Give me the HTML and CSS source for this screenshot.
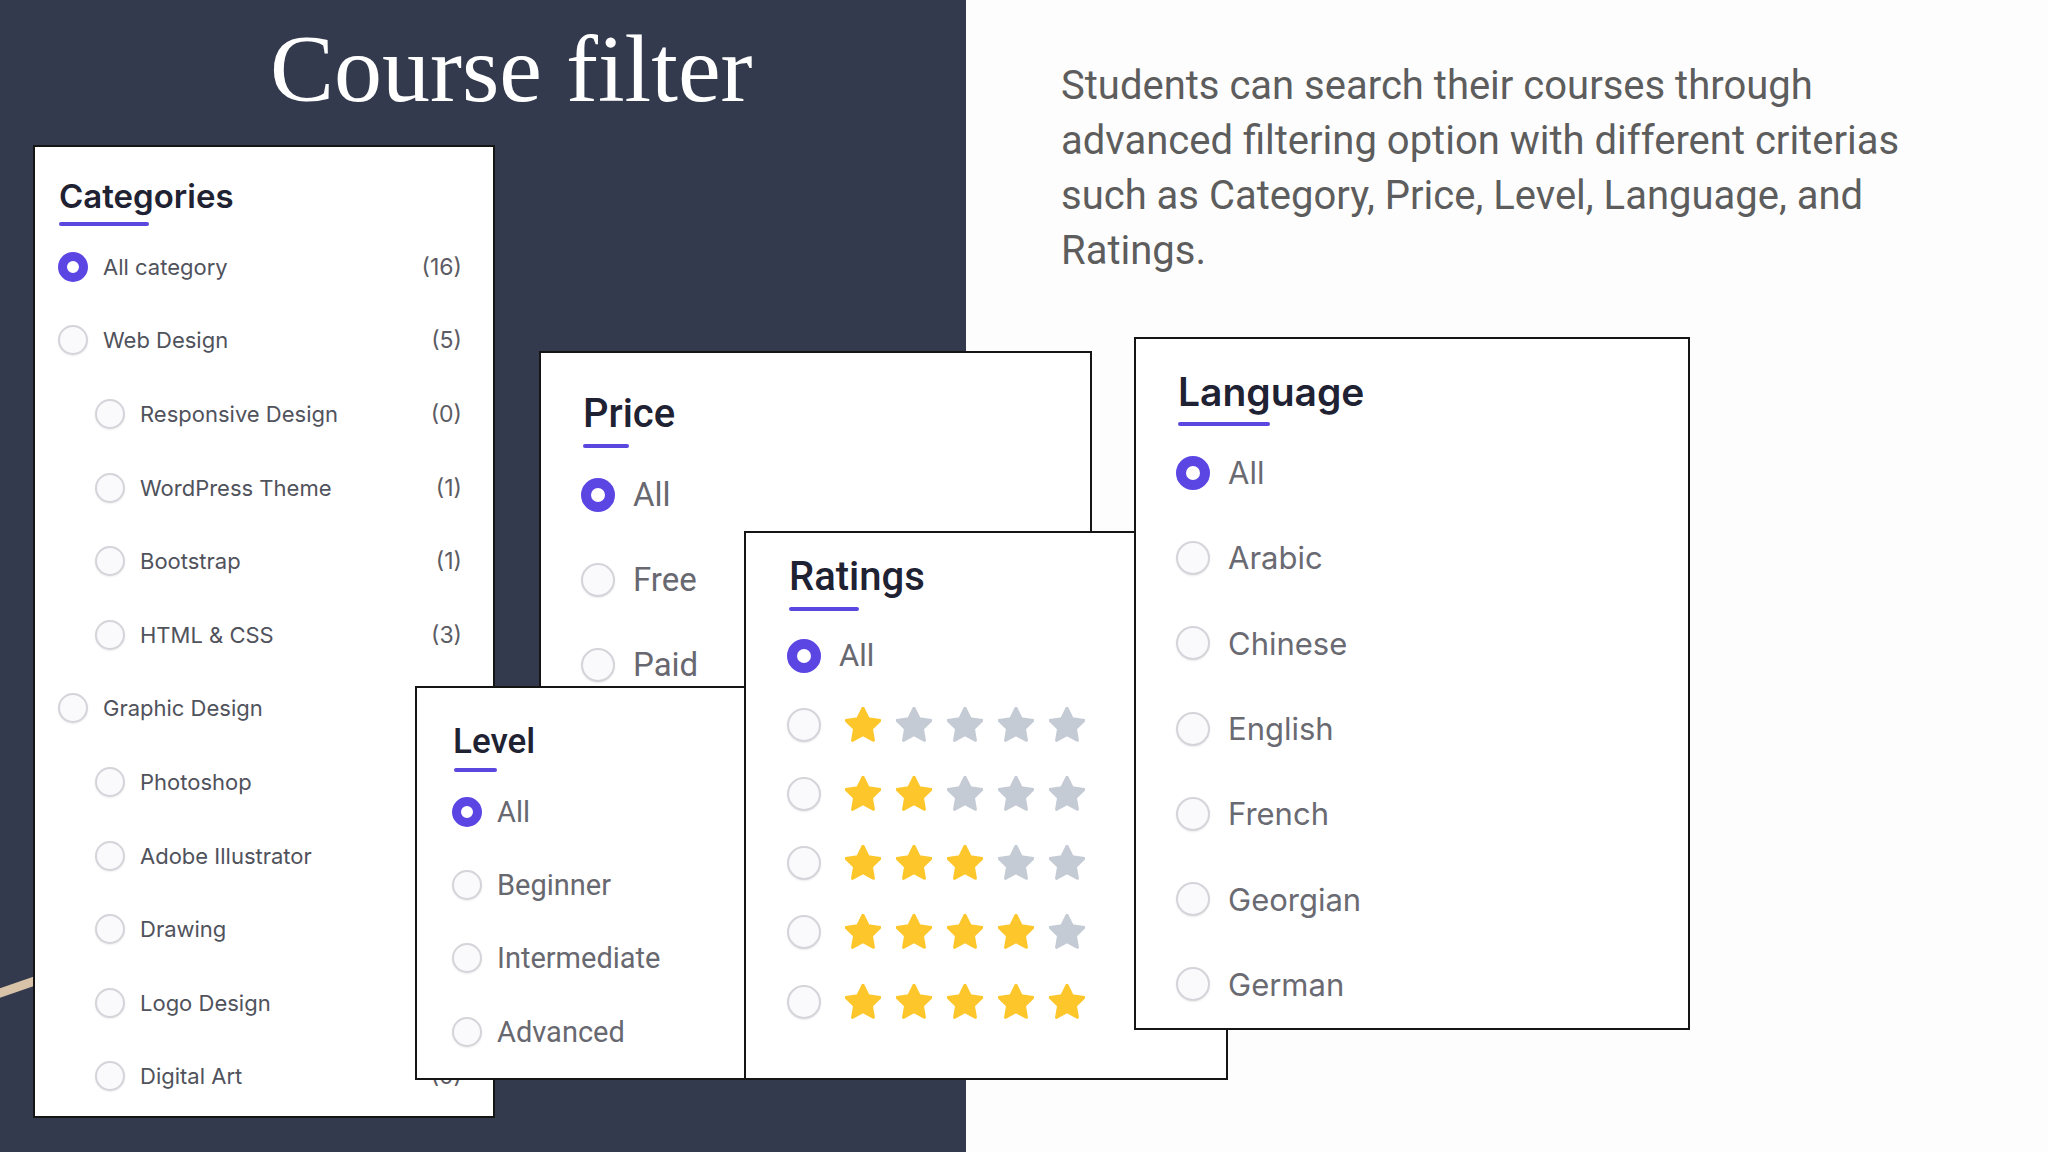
FILE: index.html
```html
<!DOCTYPE html>
<html lang="en">
<head>
<meta charset="utf-8">
<title>Course filter</title>
<link rel="stylesheet" href="styles.css">
</head>
<body>
<div class="page">
  <section class="intro-dark">
    <h1 class="title">Course filter</h1>
  </section>
  <section class="intro-light">
    <p class="desc">Students can search their courses through advanced filtering option with different criterias such as Category, Price, Level, Language, and Ratings.</p>
  </section>

  <div class="collage">
    <span class="deco-line"></span>

    <div class="card card-categories">
      <h2 class="card-head">Categories</h2>
      <span class="card-rule"></span>
      <ul class="opts">
        <li class="opt"><span class="radio on"></span><span class="label">All category</span><span class="count">(16)</span></li>
        <li class="opt"><span class="radio"></span><span class="label">Web Design</span><span class="count">(5)</span></li>
        <li class="opt sub"><span class="radio"></span><span class="label">Responsive Design</span><span class="count">(0)</span></li>
        <li class="opt sub"><span class="radio"></span><span class="label">WordPress Theme</span><span class="count">(1)</span></li>
        <li class="opt sub"><span class="radio"></span><span class="label">Bootstrap</span><span class="count">(1)</span></li>
        <li class="opt sub"><span class="radio"></span><span class="label">HTML &amp; CSS</span><span class="count">(3)</span></li>
        <li class="opt"><span class="radio"></span><span class="label">Graphic Design</span><span class="count">(4)</span></li>
        <li class="opt sub"><span class="radio"></span><span class="label">Photoshop</span><span class="count">(1)</span></li>
        <li class="opt sub"><span class="radio"></span><span class="label">Adobe Illustrator</span><span class="count">(1)</span></li>
        <li class="opt sub"><span class="radio"></span><span class="label">Drawing</span><span class="count">(1)</span></li>
        <li class="opt sub"><span class="radio"></span><span class="label">Logo Design</span><span class="count">(1)</span></li>
        <li class="opt sub"><span class="radio"></span><span class="label">Digital Art</span><span class="count">(0)</span></li>
      </ul>
    </div>

    <div class="card card-price">
      <h2 class="card-head">Price</h2>
      <span class="card-rule"></span>
      <ul class="opts">
        <li class="opt"><span class="radio on"></span><span class="label">All</span></li>
        <li class="opt"><span class="radio"></span><span class="label">Free</span></li>
        <li class="opt"><span class="radio"></span><span class="label">Paid</span></li>
      </ul>
    </div>

    <div class="card card-level">
      <h2 class="card-head">Level</h2>
      <span class="card-rule"></span>
      <ul class="opts">
        <li class="opt"><span class="radio on"></span><span class="label">All</span></li>
        <li class="opt"><span class="radio"></span><span class="label">Beginner</span></li>
        <li class="opt"><span class="radio"></span><span class="label">Intermediate</span></li>
        <li class="opt"><span class="radio"></span><span class="label">Advanced</span></li>
      </ul>
    </div>

    <div class="card card-ratings">
      <h2 class="card-head">Ratings</h2>
      <span class="card-rule"></span>
      <ul class="opts">
        <li class="opt"><span class="radio on"></span><span class="label">All</span></li>
        <li class="opt"><span class="radio"></span>
          <span class="stars">
            <svg class="star gold" viewBox="1.5 1.5 21 21"><path d="M12 2l3.09 6.26L22 9.27l-5 4.87 1.18 6.88L12 17.770l-6.18 3.25L7 14.14 2 9.27l6.91-1.01z"/></svg>
            <svg class="star grey" viewBox="1.5 1.5 21 21"><path d="M12 2l3.09 6.26L22 9.27l-5 4.87 1.18 6.88L12 17.77l-6.18 3.25L7 14.14 2 9.27l6.91-1.01z"/></svg>
            <svg class="star grey" viewBox="1.5 1.5 21 21"><path d="M12 2l3.09 6.26L22 9.27l-5 4.87 1.18 6.88L12 17.77l-6.18 3.25L7 14.14 2 9.27l6.91-1.01z"/></svg>
            <svg class="star grey" viewBox="1.5 1.5 21 21"><path d="M12 2l3.09 6.26L22 9.27l-5 4.87 1.18 6.88L12 17.77l-6.18 3.25L7 14.14 2 9.27l6.91-1.01z"/></svg>
            <svg class="star grey" viewBox="1.5 1.5 21 21"><path d="M12 2l3.09 6.26L22 9.27l-5 4.87 1.18 6.88L12 17.77l-6.18 3.25L7 14.14 2 9.27l6.91-1.01z"/></svg>
          </span>
        </li>
        <li class="opt"><span class="radio"></span>
          <span class="stars">
            <svg class="star gold" viewBox="1.5 1.5 21 21"><path d="M12 2l3.09 6.26L22 9.27l-5 4.87 1.18 6.88L12 17.77l-6.18 3.25L7 14.14 2 9.27l6.91-1.01z"/></svg>
            <svg class="star gold" viewBox="1.5 1.5 21 21"><path d="M12 2l3.09 6.26L22 9.27l-5 4.87 1.18 6.88L12 17.77l-6.18 3.25L7 14.14 2 9.27l6.91-1.01z"/></svg>
            <svg class="star grey" viewBox="1.5 1.5 21 21"><path d="M12 2l3.09 6.26L22 9.27l-5 4.87 1.18 6.88L12 17.77l-6.18 3.25L7 14.14 2 9.27l6.91-1.01z"/></svg>
            <svg class="star grey" viewBox="1.5 1.5 21 21"><path d="M12 2l3.09 6.26L22 9.27l-5 4.87 1.18 6.88L12 17.77l-6.18 3.25L7 14.14 2 9.27l6.91-1.01z"/></svg>
            <svg class="star grey" viewBox="1.5 1.5 21 21"><path d="M12 2l3.09 6.26L22 9.27l-5 4.87 1.18 6.88L12 17.77l-6.18 3.25L7 14.14 2 9.27l6.91-1.01z"/></svg>
          </span>
        </li>
        <li class="opt"><span class="radio"></span>
          <span class="stars">
            <svg class="star gold" viewBox="1.5 1.5 21 21"><path d="M12 2l3.09 6.26L22 9.27l-5 4.87 1.18 6.88L12 17.77l-6.18 3.25L7 14.14 2 9.27l6.91-1.01z"/></svg>
            <svg class="star gold" viewBox="1.5 1.5 21 21"><path d="M12 2l3.09 6.26L22 9.27l-5 4.87 1.18 6.88L12 17.77l-6.18 3.25L7 14.14 2 9.27l6.91-1.01z"/></svg>
            <svg class="star gold" viewBox="1.5 1.5 21 21"><path d="M12 2l3.09 6.26L22 9.27l-5 4.87 1.18 6.88L12 17.77l-6.18 3.25L7 14.14 2 9.27l6.91-1.01z"/></svg>
            <svg class="star grey" viewBox="1.5 1.5 21 21"><path d="M12 2l3.09 6.26L22 9.27l-5 4.87 1.18 6.88L12 17.77l-6.18 3.25L7 14.14 2 9.27l6.91-1.01z"/></svg>
            <svg class="star grey" viewBox="1.5 1.5 21 21"><path d="M12 2l3.09 6.26L22 9.27l-5 4.87 1.18 6.88L12 17.77l-6.18 3.25L7 14.14 2 9.27l6.91-1.01z"/></svg>
          </span>
        </li>
        <li class="opt"><span class="radio"></span>
          <span class="stars">
            <svg class="star gold" viewBox="1.5 1.5 21 21"><path d="M12 2l3.09 6.26L22 9.27l-5 4.87 1.18 6.88L12 17.77l-6.18 3.25L7 14.14 2 9.27l6.91-1.01z"/></svg>
            <svg class="star gold" viewBox="1.5 1.5 21 21"><path d="M12 2l3.09 6.26L22 9.27l-5 4.87 1.18 6.88L12 17.77l-6.18 3.25L7 14.14 2 9.27l6.91-1.01z"/></svg>
            <svg class="star gold" viewBox="1.5 1.5 21 21"><path d="M12 2l3.09 6.26L22 9.27l-5 4.87 1.18 6.88L12 17.77l-6.18 3.25L7 14.14 2 9.27l6.91-1.01z"/></svg>
            <svg class="star gold" viewBox="1.5 1.5 21 21"><path d="M12 2l3.09 6.26L22 9.27l-5 4.87 1.18 6.88L12 17.77l-6.18 3.25L7 14.14 2 9.27l6.91-1.01z"/></svg>
            <svg class="star grey" viewBox="1.5 1.5 21 21"><path d="M12 2l3.09 6.26L22 9.27l-5 4.87 1.18 6.88L12 17.77l-6.18 3.25L7 14.14 2 9.27l6.91-1.01z"/></svg>
          </span>
        </li>
        <li class="opt"><span class="radio"></span>
          <span class="stars">
            <svg class="star gold" viewBox="1.5 1.5 21 21"><path d="M12 2l3.09 6.26L22 9.27l-5 4.87 1.18 6.88L12 17.77l-6.18 3.25L7 14.14 2 9.27l6.91-1.01z"/></svg>
            <svg class="star gold" viewBox="1.5 1.5 21 21"><path d="M12 2l3.09 6.26L22 9.27l-5 4.87 1.18 6.88L12 17.77l-6.18 3.25L7 14.14 2 9.27l6.91-1.01z"/></svg>
            <svg class="star gold" viewBox="1.5 1.5 21 21"><path d="M12 2l3.09 6.26L22 9.27l-5 4.87 1.18 6.88L12 17.77l-6.18 3.25L7 14.14 2 9.27l6.91-1.01z"/></svg>
            <svg class="star gold" viewBox="1.5 1.5 21 21"><path d="M12 2l3.09 6.26L22 9.27l-5 4.87 1.18 6.88L12 17.77l-6.18 3.25L7 14.14 2 9.27l6.91-1.01z"/></svg>
            <svg class="star gold" viewBox="1.5 1.5 21 21"><path d="M12 2l3.09 6.26L22 9.27l-5 4.87 1.18 6.88L12 17.77l-6.18 3.25L7 14.14 2 9.27l6.91-1.01z"/></svg>
          </span>
        </li>
      </ul>
    </div>

    <div class="card card-language">
      <h2 class="card-head">Language</h2>
      <span class="card-rule"></span>
      <ul class="opts">
        <li class="opt"><span class="radio on"></span><span class="label">All</span></li>
        <li class="opt"><span class="radio"></span><span class="label">Arabic</span></li>
        <li class="opt"><span class="radio"></span><span class="label">Chinese</span></li>
        <li class="opt"><span class="radio"></span><span class="label">English</span></li>
        <li class="opt"><span class="radio"></span><span class="label">French</span></li>
        <li class="opt"><span class="radio"></span><span class="label">Georgian</span></li>
        <li class="opt"><span class="radio"></span><span class="label">German</span></li>
      </ul>
    </div>
  </div>
</div>
</body>
</html>
```

FILE: styles.css
```css
html, body {
  margin: 0;
  padding: 0;
  background: #fdfdfd;
}

.page {
  position: relative;
  width: 2048px;
  height: 1152px;
  display: grid;
  grid-template-columns: 966px 1fr;
  overflow: hidden;
}

/* ---------- intro ---------- */
.intro-dark {
  background: #333a4e;
  padding: 21px 0 0 270px;
}

.title {
  margin: 0;
  font-family: "Liberation Serif", "DejaVu Serif", serif;
  font-weight: 400;
  font-size: 96px;
  line-height: 96px;
  color: #ffffff;
}

.intro-light {
  background: #fdfdfd;
  padding: 58px 0 0 95px;
}

.desc {
  margin: 0;
  width: 880px;
  font-family: Roboto, "Liberation Sans", sans-serif;
  font-size: 40px;
  line-height: 55px;
  color: #5d5d5d;
}

/* ---------- collage of filter cards ---------- */
.collage {
  position: absolute;
  inset: 0;
}

.deco-line {
  position: absolute;
  left: -6px;
  top: 982px;
  width: 50px;
  height: 9px;
  background: #d9c3a8;
  transform: rotate(-19deg);
}

.card {
  position: absolute;
  box-sizing: border-box;
  background: #ffffff;
  border: 2px solid #151515;
  display: flex;
  flex-direction: column;
  align-items: flex-start;
}

.card-head {
  margin: 0;
  font-family: Roboto, "Liberation Sans", sans-serif;
  font-weight: 500;
  color: #1f2232;
}

.card-rule {
  display: block;
  height: 4px;
  border-radius: 2px;
  background: #5a47df;
}

.opts {
  list-style: none;
  margin: 0;
  padding: 0;
  align-self: stretch;
}

.opt {
  display: flex;
  align-items: center;
}

.label {
  font-family: Roboto, "Liberation Sans", sans-serif;
  color: #686870;
}

.radio {
  flex: none;
  box-sizing: border-box;
  border-radius: 50%;
  border: 2px solid #d4d4da;
  background: #fafafc;
  box-shadow: 0 1px 2px rgba(0, 0, 0, 0.08);
}

.radio.on {
  background: #ffffff;
  border-color: #5b46e4;
  box-shadow: none;
}

/* Categories */
.card-categories {
  left: 33px;
  top: 145px;
  width: 462px;
  height: 973px;
  z-index: 1;
  padding: 29px 31px 0 23px;
}

.card-categories .card-head {
  font-family: Inter, "Noto Sans", sans-serif;
  font-weight: 600;
  font-size: 33px;
  line-height: 40px;
  margin-left: 1px;
}

.card-categories .card-rule {
  width: 90px;
  margin: 6px 0 0 1px;
}

.card-categories .opts {
  margin-top: 4px;
}

.card-categories .opt {
  height: 73.6px;
  gap: 15px;
}

.card-categories .opt.sub {
  padding-left: 37px;
}

.card-categories .radio {
  width: 30px;
  height: 30px;
}

.card-categories .radio.on {
  border-width: 9px;
}

.card-categories .label,
.card-categories .count {
  font-family: Inter, "Noto Sans", sans-serif;
  font-size: 22px;
  color: #50525c;
}

.card-categories .label {
  flex: 1;
}

.card-categories .count {
  font-size: 23px;
  color: #5c5c64;
}

/* Price */
.card-price {
  left: 539px;
  top: 351px;
  width: 553px;
  height: 520px;
  z-index: 2;
  padding: 38px 0 0 40px;
}

.card-price .card-head {
  font-size: 40px;
  line-height: 46px;
  margin-left: 2px;
}

.card-price .card-rule {
  width: 46px;
  margin: 7px 0 0 2px;
}

.card-price .opts {
  margin-top: 4px;
}

.card-price .opt {
  height: 85px;
  gap: 18px;
}

.card-price .radio {
  width: 34px;
  height: 34px;
}

.card-price .radio.on {
  border-width: 10px;
}

.card-price .label {
  font-size: 33px;
}

/* Level */
.card-level {
  left: 415px;
  top: 686px;
  width: 331px;
  height: 394px;
  z-index: 3;
  padding: 34px 0 0 35px;
}

.card-level .card-head {
  font-size: 35px;
  line-height: 40px;
  margin-left: 1px;
}

.card-level .card-rule {
  width: 43px;
  margin: 6px 0 0 2px;
}

.card-level .opts {
  margin-top: 3px;
}

.card-level .opt {
  height: 73.3px;
  gap: 15px;
}

.card-level .radio {
  width: 30px;
  height: 30px;
}

.card-level .radio.on {
  border-width: 9px;
}

.card-level .label {
  font-size: 29px;
}

/* Ratings */
.card-ratings {
  left: 744px;
  top: 531px;
  width: 484px;
  height: 549px;
  z-index: 4;
  padding: 21px 0 0 41px;
}

.card-ratings .card-head {
  font-size: 40px;
  line-height: 46px;
  margin-left: 2px;
}

.card-ratings .card-rule {
  width: 70px;
  margin: 7px 0 0 2px;
}

.card-ratings .opts {
  margin-top: 10px;
}

.card-ratings .opt {
  height: 69.2px;
  gap: 18px;
}

.card-ratings .radio {
  width: 34px;
  height: 34px;
}

.card-ratings .radio.on {
  border-width: 10px;
}

.card-ratings .label {
  font-size: 31px;
}

.stars {
  display: flex;
  gap: 15px;
  margin-left: 6px;
}

.star {
  width: 36px;
  height: 36px;
  stroke-width: 1.6;
  stroke-linejoin: round;
}

.star.gold {
  fill: #fdc72c;
  stroke: #fdc72c;
}

.star.grey {
  fill: #c5cbd4;
  stroke: #c5cbd4;
}

/* Language */
.card-language {
  left: 1134px;
  top: 337px;
  width: 556px;
  height: 693px;
  z-index: 5;
  padding: 30px 0 0 40px;
}

.card-language .card-head {
  font-family: Inter, "Noto Sans", sans-serif;
  font-weight: 600;
  font-size: 39px;
  line-height: 46px;
  margin-left: 2px;
}

.card-language .card-rule {
  width: 92px;
  margin: 7px 0 0 2px;
}

.card-language .opts {
  margin-top: 4px;
}

.card-language .opt {
  height: 85.3px;
  gap: 18px;
}

.card-language .radio {
  width: 34px;
  height: 34px;
}

.card-language .radio.on {
  border-width: 10px;
}

.card-language .label {
  font-family: Inter, "Noto Sans", sans-serif;
  font-size: 31px;
  color: #6a6a72;
}
```
